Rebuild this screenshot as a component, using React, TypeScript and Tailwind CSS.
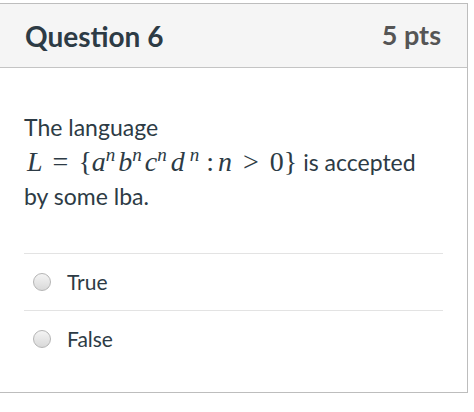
const math = "font-['Liberation_Serif','DejaVu_Serif',serif]";

function Radio({ label }: { label: string }) {
  return (
    <div className="flex h-[56px] items-center gap-[16px] pl-[9px]">
      <span className="h-[18px] w-[18px] rounded-full border border-[#b5b5b5] bg-gradient-to-b from-[#f4f4f4] to-[#d9d9d9]" />
      <span className="text-[21px] text-[#2d3b45]">{label}</span>
    </div>
  );
}

function Sup({ className = "" }: { className?: string }) {
  return (
    <sup className={`text-[19px] ${className}`}>
      <i>n</i>
    </sup>
  );
}

export default function App() {
  return (
    <div className="h-[412px] w-[474px] overflow-hidden bg-white pt-[3px] font-['Lato',sans-serif]">
      <div className="-ml-px h-[390px] w-[469px] border border-[#bdbdbd]">
        <div className="flex h-[64px] items-center justify-between border-b border-[#c4c4c4] bg-[#f5f5f5] pl-[25px] pr-[26px]">
          <h1 className="text-[28px] font-bold text-[#2d3b45]">Question 6</h1>
          <span className="text-[27px] font-bold text-[#555]">5 pts</span>
        </div>
        <div className="px-[24px] pt-[42px]">
          <p className="text-[23px] leading-[34.5px] text-[#2d3b45]">
            The language
            <br />
            <span className={`${math} ml-[3px] text-[28px] leading-[0]`}>
              <i>L</i>
              <span className="mx-[10px]">=</span>
              {"{"}
              <i>a</i>
              <Sup className="mr-[3px]" />
              <i>b</i>
              <Sup className="mr-[3px]" />
              <i>c</i>
              <Sup className="mr-[4px]" />
              <i>d</i>
              <Sup className="ml-[5px]" />
              <span className="ml-[7px] mr-[4px]">:</span>
              <i>n</i>
              <span className="mx-[11px]">&gt;</span>0{"}"}
            </span>{" "}
            is accepted
            <br />
            by some lba.
          </p>
          <div className="mt-[39px] border-t border-[#e3e3e3]">
            <Radio label="True" />
            <div className="border-t border-[#e3e3e3]" />
            <Radio label="False" />
          </div>
        </div>
      </div>
    </div>
  );
}
